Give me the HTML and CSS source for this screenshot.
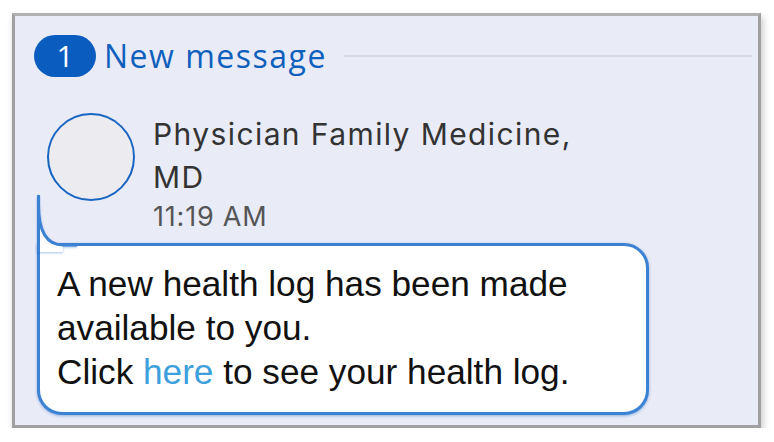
FILE: index.html
```html
<!DOCTYPE html>
<html lang="en">
<head>
<meta charset="utf-8">
<title>New message</title>
<link rel="stylesheet" href="styles.css">
</head>
<body>
<div class="frame">
  <div class="header">
    <span class="badge">1</span>
    <span class="header-title">New message</span>
    <span class="divider"></span>
  </div>
  <div class="message">
    <div class="sender">
      <div class="avatar"></div>
      <div class="sender-info">
        <div class="sender-name">Physician Family Medicine, MD</div>
        <div class="sender-time">11:19 AM</div>
      </div>
    </div>
    <div class="bubble">
      <svg class="tail" width="44" height="60" viewBox="0 0 44 60">
        <path d="M1.5 14 Q1.5 53 26 53 L26 60 L1.5 60 Z" fill="#ffffff"/>
        <path d="M1.5 3 L1.5 60" stroke="#3b82d3" stroke-width="3" fill="none"/>
        <path d="M1.5 13 Q1.5 53 26 53 L40 53" stroke="#3b82d3" stroke-width="3" fill="none"/>
      </svg>
      <p class="bubble-text">A new health log has been made available to you.<br>Click <a class="link" href="#">here</a> to see your health log.</p>
    </div>
  </div>
</div>
</body>
</html>
```
FILE: styles.css
```css
html, body {
  margin: 0;
  padding: 0;
  background: #ffffff;
}

.frame {
  box-sizing: border-box;
  margin: 13px 0 0 12px;
  width: 749px;
  height: 415px;
  border: 3px solid #a0a0a0;
  border-top-color: #b2b2b2;
  background: #e9ebf7;
  box-shadow: 2px 4px 7px rgba(0, 0, 0, 0.22);
  padding: 19px 6px 0 19px;
  font-family: "Liberation Sans", Arial, sans-serif;
}

.header {
  display: flex;
  align-items: center;
  height: 42px;
}

.badge {
  display: flex;
  align-items: center;
  justify-content: center;
  width: 62px;
  height: 42px;
  border-radius: 21px;
  background: #0b5cbf;
  color: #ffffff;
  font-family: "Open Sans", sans-serif;
  font-size: 30px;
  line-height: 1;
}

.header-title {
  margin-left: 8px;
  color: #0f5fbd;
  font-family: "Open Sans", sans-serif;
  font-size: 32px;
  line-height: 42px;
  letter-spacing: 1.5px;
}

.divider {
  flex: 1;
  height: 2px;
  margin-left: 17px;
  background: #d7d8e2;
}

.message {
  padding: 36px 0 0 3px;
}

.sender {
  display: flex;
  align-items: flex-start;
  padding-left: 10px;
}

.avatar {
  box-sizing: border-box;
  width: 88px;
  height: 88px;
  border-radius: 50%;
  border: 2px solid #1a65c2;
  background: #ececf0;
}

.sender-info {
  margin-left: 18px;
}

.sender-name {
  width: 460px;
  color: #333333;
  font-family: Inter, sans-serif;
  font-size: 30px;
  line-height: 43px;
  letter-spacing: 1.4px;
}

.sender-time {
  margin-top: 2px;
  color: #555555;
  font-family: Inter, sans-serif;
  font-size: 27px;
  line-height: 32px;
  letter-spacing: 0.8px;
}

.bubble {
  position: relative;
  box-sizing: border-box;
  width: 612px;
  margin-top: 10px;
  border: 3px solid #3b82d3;
  border-radius: 0 25px 25px 25px;
  background: #ffffff;
  box-shadow: 0 1px 3px rgba(30, 100, 200, 0.45);
  padding: 16px 10px 18px 17px;
}

.tail {
  position: absolute;
  left: -3px;
  top: -54.5px;
  display: block;
  filter: drop-shadow(0 1px 1px rgba(30, 100, 200, 0.4));
}

.bubble-text {
  margin: 0;
  color: #111111;
  font-family: "Liberation Sans", Arial, sans-serif;
  font-size: 35.2px;
  line-height: 44px;
}

.link {
  color: #3d9fdc;
  text-decoration: none;
}
```
